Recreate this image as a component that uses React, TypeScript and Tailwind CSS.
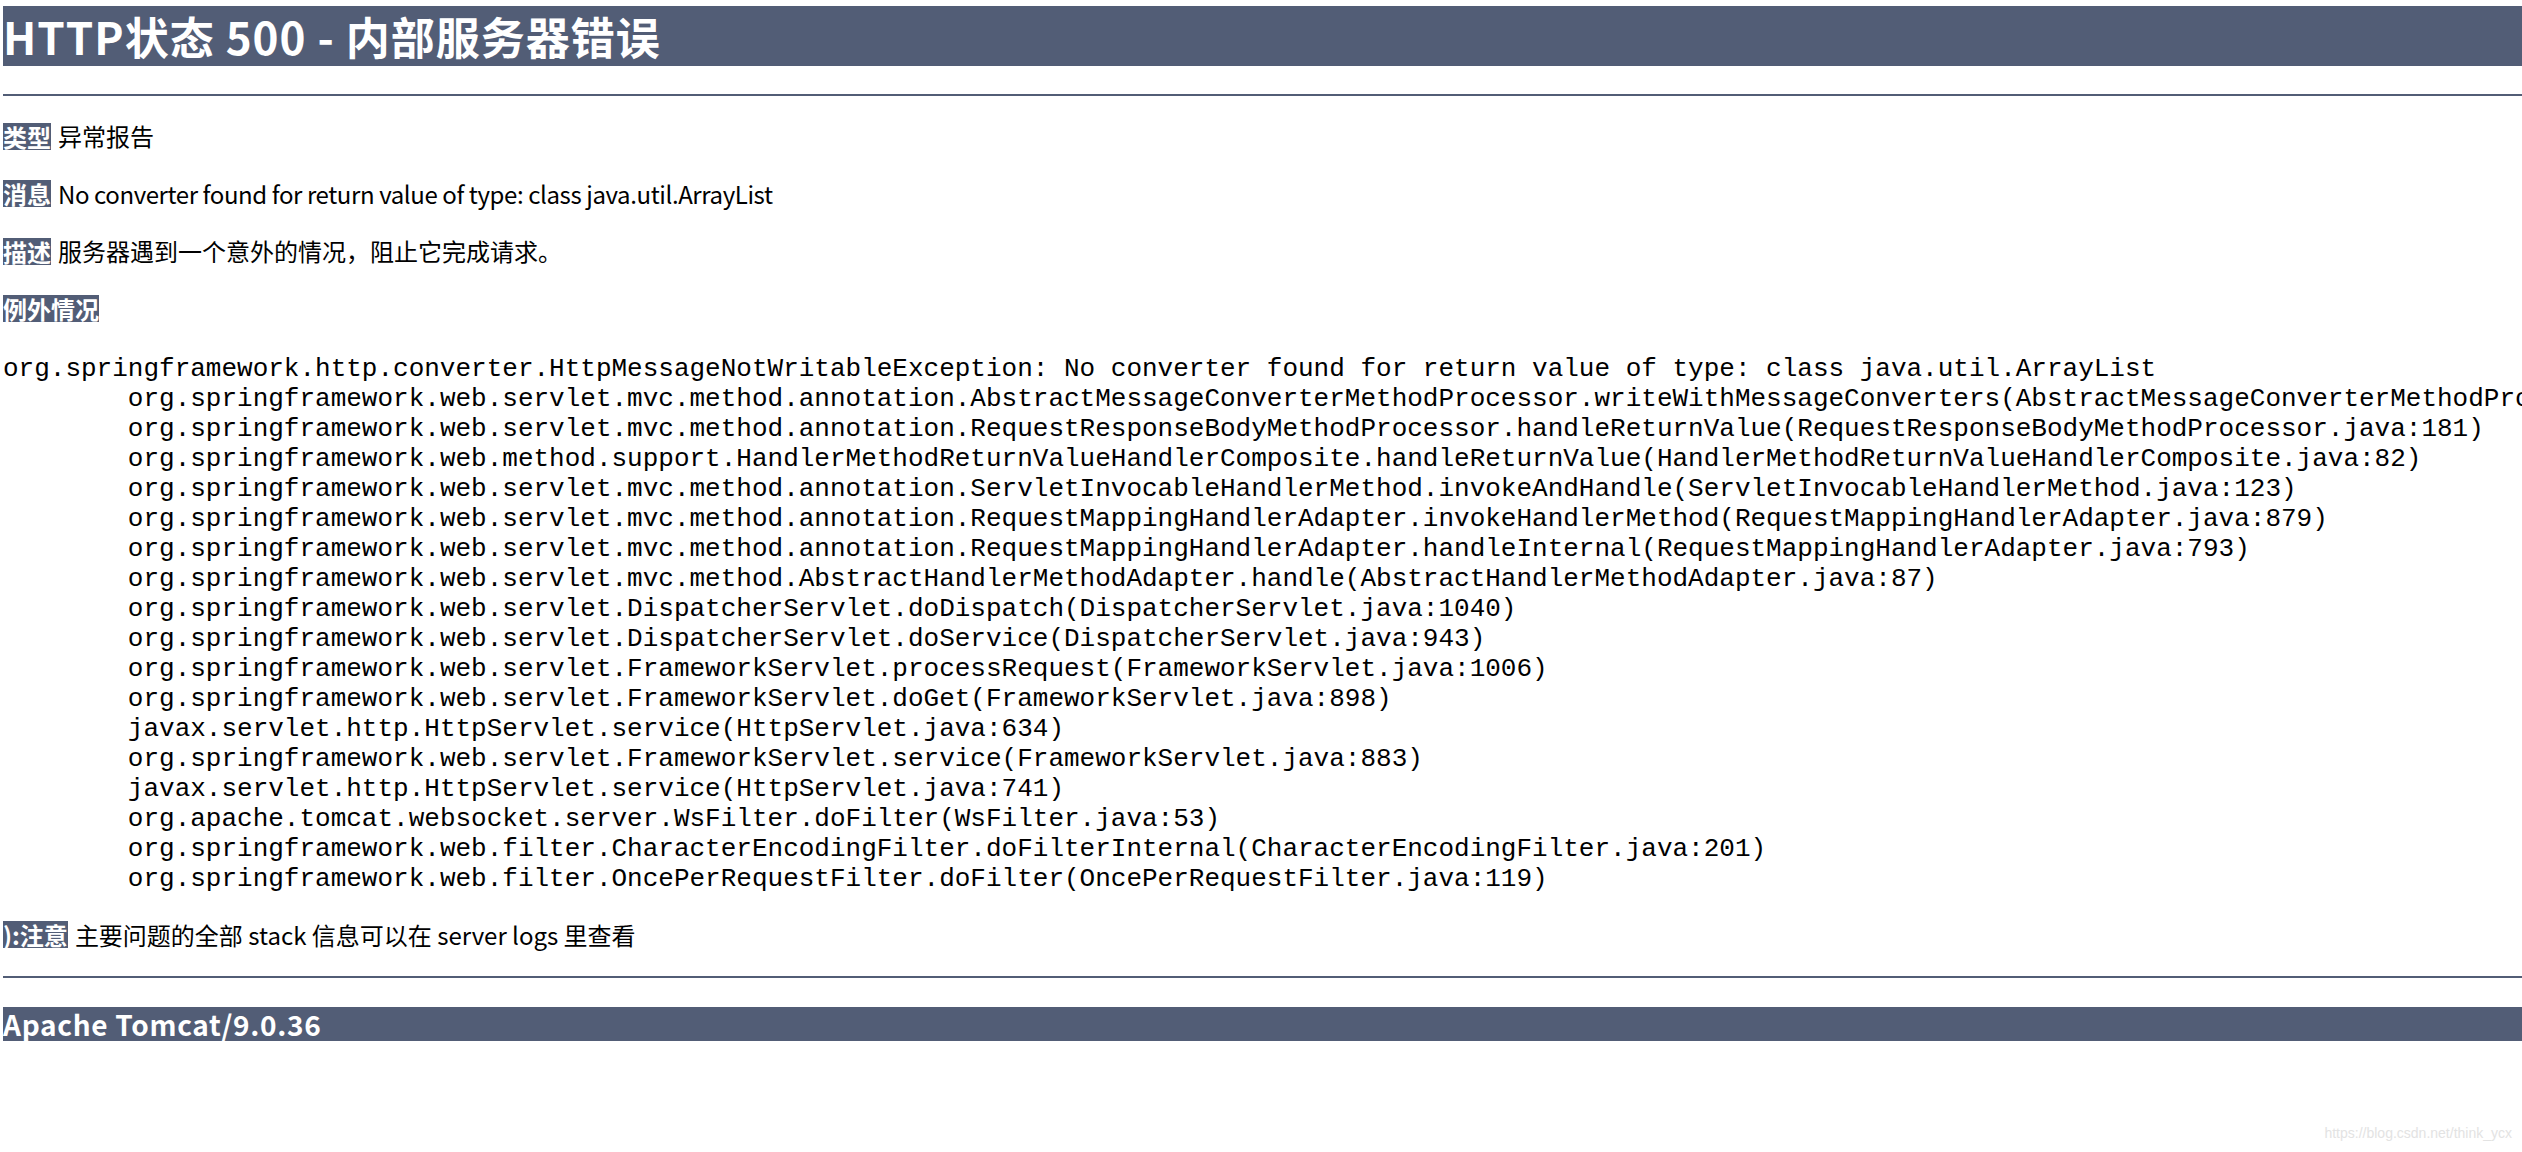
const stack = [
  'org.springframework.http.converter.HttpMessageNotWritableException: No converter found for return value of type: class java.util.ArrayList',
  '\torg.springframework.web.servlet.mvc.method.annotation.AbstractMessageConverterMethodProcessor.writeWithMessageConverters(AbstractMessageConverterMethodProcessor.java:230)',
  '\torg.springframework.web.servlet.mvc.method.annotation.RequestResponseBodyMethodProcessor.handleReturnValue(RequestResponseBodyMethodProcessor.java:181)',
  '\torg.springframework.web.method.support.HandlerMethodReturnValueHandlerComposite.handleReturnValue(HandlerMethodReturnValueHandlerComposite.java:82)',
  '\torg.springframework.web.servlet.mvc.method.annotation.ServletInvocableHandlerMethod.invokeAndHandle(ServletInvocableHandlerMethod.java:123)',
  '\torg.springframework.web.servlet.mvc.method.annotation.RequestMappingHandlerAdapter.invokeHandlerMethod(RequestMappingHandlerAdapter.java:879)',
  '\torg.springframework.web.servlet.mvc.method.annotation.RequestMappingHandlerAdapter.handleInternal(RequestMappingHandlerAdapter.java:793)',
  '\torg.springframework.web.servlet.mvc.method.AbstractHandlerMethodAdapter.handle(AbstractHandlerMethodAdapter.java:87)',
  '\torg.springframework.web.servlet.DispatcherServlet.doDispatch(DispatcherServlet.java:1040)',
  '\torg.springframework.web.servlet.DispatcherServlet.doService(DispatcherServlet.java:943)',
  '\torg.springframework.web.servlet.FrameworkServlet.processRequest(FrameworkServlet.java:1006)',
  '\torg.springframework.web.servlet.FrameworkServlet.doGet(FrameworkServlet.java:898)',
  '\tjavax.servlet.http.HttpServlet.service(HttpServlet.java:634)',
  '\torg.springframework.web.servlet.FrameworkServlet.service(FrameworkServlet.java:883)',
  '\tjavax.servlet.http.HttpServlet.service(HttpServlet.java:741)',
  '\torg.apache.tomcat.websocket.server.WsFilter.doFilter(WsFilter.java:53)',
  '\torg.springframework.web.filter.CharacterEncodingFilter.doFilterInternal(CharacterEncodingFilter.java:201)',
  '\torg.springframework.web.filter.OncePerRequestFilter.doFilter(OncePerRequestFilter.java:119)',
].join('\n')

function Row({
  label,
  text,
  className,
  textClass,
}: {
  label: string
  text?: string
  className?: string
  textClass?: string
}) {
  return (
    <p className={`flex h-[34px] items-center whitespace-nowrap text-[24px] text-black ${className ?? ''}`}>
      <b className="bg-[#525D76] font-bold leading-[27px] text-white">{label}</b>
      {text && <span className={`ml-[7px] ${textClass ?? ''}`}>{text}</span>}
    </p>
  )
}

export default function App() {
  return (
    <div className="relative h-[1152px] w-full overflow-hidden bg-white pl-[3px] font-['Noto_Sans_CJK_SC',sans-serif]">
      <h1 className="mt-[6px] h-[60px] whitespace-nowrap bg-[#525D76] text-[44px] font-bold leading-[60px] tracking-[1px] text-white">
        HTTP状态 500 - 内部服务器错误
      </h1>
      <div className="mt-[28px] h-[2px] bg-[#525D76]" />

      <Row className="mt-[23px]" label="类型" text="异常报告" />
      <Row
        className="mt-[23.5px]"
        label="消息"
        text="No converter found for return value of type: class java.util.ArrayList"
        textClass="tracking-[-0.4px]"
      />
      <Row className="mt-[23.5px]" label="描述" text="服务器遇到一个意外的情况，阻止它完成请求。" />
      <Row className="mt-[23.5px]" label="例外情况" />

      <pre className="mt-[28px] whitespace-pre font-['Liberation_Mono',monospace] text-[26px] leading-[30px] text-black [tab-size:8]">
        {stack}
      </pre>

      <Row className="mt-[24px]" label="):注意" text="主要问题的全部 stack 信息可以在 server logs 里查看" />
      <div className="mt-[24px] h-[2px] bg-[#525D76]" />

      <h3 className="mt-[29px] h-[34px] whitespace-nowrap bg-[#525D76] text-[28px] font-bold leading-[34px] tracking-[0.7px] text-white">
        Apache Tomcat/9.0.36
      </h3>

      <div className="absolute bottom-[8px] right-[10px] font-['Liberation_Sans',sans-serif] text-[14px] text-[#e3e3e3]">
        https://blog.csdn.net/think_ycx
      </div>
    </div>
  )
}
